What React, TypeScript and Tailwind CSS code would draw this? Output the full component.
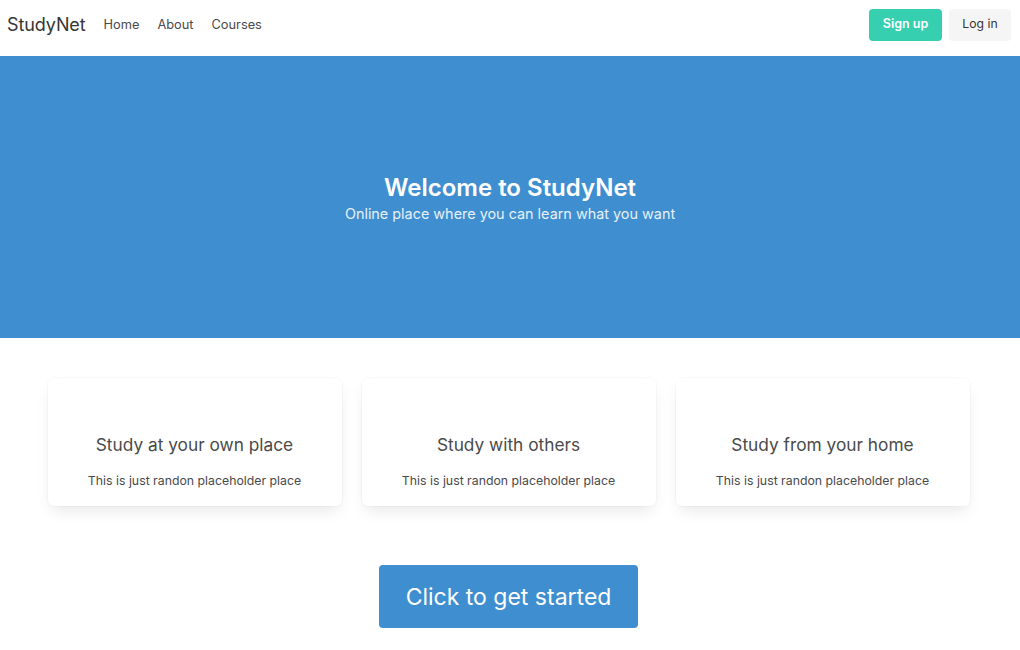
const features = [
  { title: "Study at your own place", text: "This is just randon placeholder place" },
  { title: "Study with others", text: "This is just randon placeholder place" },
  { title: "Study from your home", text: "This is just randon placeholder place" },
]

const Navbar = () => (
  <nav className="flex h-[56px] items-center justify-between bg-white pb-[8px] pl-[7px] pr-[9px]">
    <div className="flex items-center pt-[2px]">
      <a className="text-[18px] leading-none text-[#363636] tracking-[-0.1px]">StudyNet</a>
      <div className="ml-[18px] flex items-center gap-[18px] text-[12.8px] text-[#4a4a4a]">
        <a>Home</a>
        <a>About</a>
        <a>Courses</a>
      </div>
    </div>
    <div className="flex items-center gap-[7px] pt-[1px] text-[12.5px]">
      <button className="h-[32px] w-[73px] rounded-[4px] bg-[#36d0b0] font-semibold text-white">
        Sign up
      </button>
      <button className="h-[32px] w-[62px] rounded-[4px] bg-[#f5f5f5] text-[12.2px] text-[#363636]">
        Log in
      </button>
    </div>
  </nav>
)

export default function App() {
  return (
    <div
      className="min-h-screen bg-white text-[#4a4a4a]"
      style={{ fontFamily: "Inter, 'Noto Sans', sans-serif" }}
    >
      <Navbar />
      <section className="flex h-[282px] flex-col items-center justify-center bg-[#3e8ed0] pt-[4px] text-center">
        <h1 className="text-[24px] font-semibold leading-[30px] text-white">Welcome to StudyNet</h1>
        <p className="-mt-[1px] text-[14.4px] leading-[24px] text-[#e6f0fa]">
          Online place where you can learn what you want
        </p>
      </section>
      <div className="pr-[3px]">
        <section className="mx-auto mt-[40px] grid w-[922px] grid-cols-3 gap-[20px]">
          {features.map((f) => (
            <div
              key={f.title}
              className="flex h-[128px] flex-col items-center rounded-[6px] bg-white pt-[55px] text-center shadow-[0_8px_16px_-4px_rgba(10,10,10,0.1),0_0_0_1px_rgba(10,10,10,0.02)]"
            >
              <h3 className="text-[17.3px] leading-[24px] text-[#4a4a4a]">{f.title}</h3>
              <p className="mt-[15px] text-[12.3px] leading-[18px] text-[#4a4a4a]">{f.text}</p>
            </div>
          ))}
        </section>
        <div className="mt-[59px] flex justify-center">
          <button className="h-[63px] w-[259px] rounded-[4px] bg-[#3e8ed0] pt-[2px] text-[23px] text-white">
            Click to get started
          </button>
        </div>
      </div>
    </div>
  )
}
